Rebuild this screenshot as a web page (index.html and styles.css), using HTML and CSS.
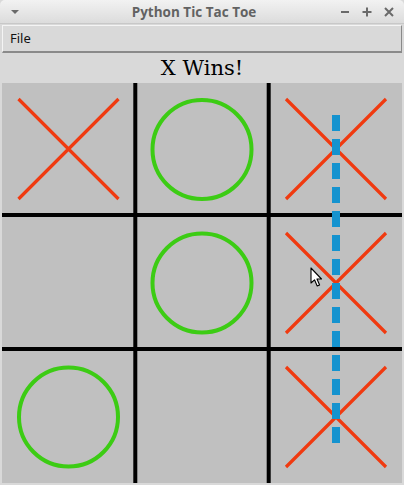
FILE: index.html
```html
<!DOCTYPE html>
<html>
<head>
<meta charset="utf-8">
<link rel="stylesheet" href="styles.css">
</head>
<body>
<div class="window">
  <div class="titlebar">
    <svg class="tb-menu" width="10" height="6" viewBox="0 0 10 6"><polygon points="1,1 9,1 5,5" fill="#6a6a6a"/></svg>
    <div class="tb-title">Python Tic Tac Toe</div>
    <div class="tb-controls">
      <svg width="12" height="12" viewBox="0 0 12 12"><rect x="2" y="5" width="8" height="2" fill="#6a6a6a"/></svg>
      <svg width="12" height="12" viewBox="0 0 12 12"><rect x="1.5" y="5" width="9" height="2" fill="#6a6a6a"/><rect x="5" y="1.5" width="2" height="9" fill="#6a6a6a"/></svg>
      <svg width="12" height="12" viewBox="0 0 12 12"><path d="M2 2 L10 10 M10 2 L2 10" stroke="#6a6a6a" stroke-width="2"/></svg>
    </div>
  </div>
  <div class="menubar"><span class="menu-item">File</span></div>
  <div class="status">X Wins!</div>
  <div class="board">
    <svg width="400" height="400" viewBox="0 0 400 400">
      <rect width="400" height="400" fill="#c0c0c0"/>
      <g stroke="#000" stroke-width="4">
        <line x1="133.3" y1="0" x2="133.3" y2="400"/>
        <line x1="266.7" y1="0" x2="266.7" y2="400"/>
        <line x1="0" y1="132" x2="400" y2="132"/>
        <line x1="0" y1="266" x2="400" y2="266"/>
      </g>
      <g stroke="#f03a10" stroke-width="3.2">
        <path d="M16.5 16 L116.5 116 M116.5 16 L16.5 116"/>
        <path d="M284 16 L384 116 M384 16 L284 116"/>
        <path d="M284 150 L384 250 M384 150 L284 250"/>
        <path d="M284 284 L384 384 M384 284 L284 384"/>
      </g>
      <g stroke="#3ccc14" stroke-width="4" fill="none">
        <circle cx="200" cy="66.5" r="49.5"/>
        <circle cx="200" cy="200" r="49.5"/>
        <circle cx="66.5" cy="334" r="49.5"/>
      </g>
      <line x1="334" y1="32" x2="334" y2="366.7" stroke="#1593cf" stroke-width="8" stroke-dasharray="16 8"/>
    </svg>
    <svg class="cursor" width="14" height="22" viewBox="0 0 14 22">
      <path d="M1 1 L1 16 L4.5 12.8 L7.2 19 L9.6 18 L7 12 L11.5 12 Z" fill="#fff" stroke="#000" stroke-width="1.1" stroke-linejoin="round"/>
    </svg>
  </div>
</div>
</body>
</html>
```
FILE: styles.css
```css
html, body {
  margin: 0;
  padding: 0;
  background: #d9d9d9;
}
.window {
  width: 404px;
  height: 485px;
  background: #d9d9d9;
  display: flex;
  flex-direction: column;
  overflow: hidden;
}
.titlebar {
  height: 24px;
  flex: none;
  background: linear-gradient(#f2f2f2, #dcdcdc);
  border-radius: 5px 5px 0 0;
  display: flex;
  align-items: center;
  position: relative;
  box-sizing: border-box;
  border-bottom: 1px solid #c8c8c8;
}
.tb-menu {
  margin-left: 10px;
}
.tb-title {
  position: absolute;
  left: 0;
  right: 16px;
  text-align: center;
  font-family: "Open Sans", "Noto Sans", sans-serif;
  font-weight: bold;
  font-size: 13.5px;
  color: #626262;
  line-height: 24px;
}
.tb-controls {
  margin-left: auto;
  margin-right: 9px;
  display: flex;
  gap: 10px;
}
.menubar {
  height: 28px;
  flex: none;
  margin: 1px 2px 0 2px;
  box-sizing: border-box;
  border-top: 1px solid #f4f4f4;
  border-left: 1px solid #f4f4f4;
  border-right: 1px solid #8a8a8a;
  border-bottom: 2px solid #8a8a8a;
  display: flex;
  align-items: center;
}
.menu-item {
  font-family: "Noto Sans", "Open Sans", sans-serif;
  font-size: 13px;
  color: #111;
  margin-left: 7px;
  margin-top: -1px;
}
.status {
  height: 30px;
  flex: none;
  text-align: center;
  font-family: "DejaVu Serif", serif;
  font-size: 21px;
  line-height: 30px;
  color: #000;
}
.board {
  width: 400px;
  height: 400px;
  margin-left: 2px;
  position: relative;
}
.board svg {
  display: block;
}
.cursor {
  position: absolute;
  left: 308px;
  top: 184px;
}
```
